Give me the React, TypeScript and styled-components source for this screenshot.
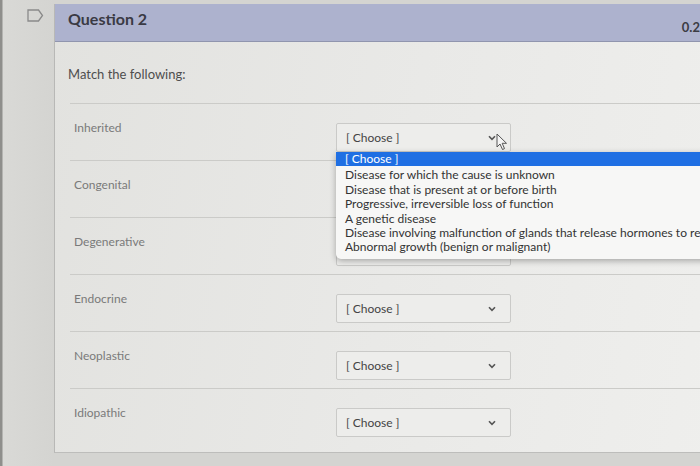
import styled, { createGlobalStyle } from 'styled-components';

const GlobalStyle = createGlobalStyle`
  html, body {
    margin: 0;
    padding: 0;
    overflow: hidden;
    background: #d6d6d3;
  }
  body {
    font-family: Lato, "Open Sans", "Liberation Sans", sans-serif;
  }
`;

const Page = styled.div`
  width: 700px;
  height: 466px;
  overflow: hidden;
  display: flex;
  padding-top: 4px;
  box-sizing: border-box;
  background: linear-gradient(90deg, #8f8f8c 0, #8f8f8c 2px, #d9d9d6 3px, #d4d4d1 54px);
`;

const Gutter = styled.div`
  width: 54px;
  flex: none;
  display: flex;
  justify-content: flex-end;
  padding: 5px 10px 0 0;
  box-sizing: border-box;
`;

const Card = styled.section`
  flex: none;
  width: 680px;
  height: 448px;
  display: flex;
  flex-direction: column;
  border-left: 1px solid #b8b8b6;
  border-bottom: 1px solid #bdbdbb;
  background: linear-gradient(100deg, #e2e2df 0%, #e9e9e7 50%, #efefed 100%);
`;

const Header = styled.header`
  height: 38px;
  flex: none;
  display: flex;
  justify-content: space-between;
  align-items: center;
  padding: 0 14px 9px 13px;
  box-sizing: border-box;
  background: #adb2ce;
  border-bottom: 1px solid #9095ae;
`;

const Title = styled.h2`
  margin: 0;
  font-size: 16px;
  font-weight: 700;
  color: #3a3a44;
`;

const Points = styled.span`
  margin-top: 18px;
  font-size: 13px;
  font-weight: 700;
  color: #3c3c44;
`;

const Body = styled.div`
  padding: 24px 0 0 13px;
`;

const Prompt = styled.p`
  margin: 0;
  font-size: 13px;
  line-height: 16px;
  color: #4e4e4e;
`;

const MatchList = styled.div`
  margin-top: 21px;
  display: flex;
  flex-direction: column;
`;

const Row = styled.div<{ $raised?: boolean }>`
  position: relative;
  height: 56px;
  display: grid;
  grid-template-columns: 266px 175px;
  align-items: start;
  border-top: 1px solid #cbcbc8;
  margin-left: 2px;
  z-index: ${(p) => (p.$raised ? 2 : 1)};
`;

const Label = styled.div`
  padding: 16px 0 0 4px;
  font-size: 12px;
  line-height: 15px;
  color: #7a7a7a;
`;

const SelectBox = styled.div`
  position: relative;
  margin-top: 19px;
  height: 29px;
  display: flex;
  align-items: center;
  justify-content: space-between;
  padding: 0 14px 0 9px;
  box-sizing: border-box;
  border: 1px solid #cacac8;
  border-radius: 2px;
  background: #ededeb;
  font-size: 12px;
  color: #444444;
`;

const Chevron = styled.svg`
  width: 8px;
  height: 6px;
`;

const Cursor = styled.svg`
  position: absolute;
  right: 2px;
  top: 9px;
  width: 12px;
  height: 18px;
`;

const Dropdown = styled.ul`
  position: absolute;
  top: 100%;
  left: -1px;
  width: 390px;
  margin: 1px 0 0;
  padding: 0 0 4px;
  list-style: none;
  background: #f7f7f6;
  border-radius: 0 0 5px 5px;
  box-shadow: 0 2px 6px rgba(0, 0, 0, 0.3);
`;

const Option = styled.li<{ $active?: boolean }>`
  padding: 0 9px;
  margin: ${(p) => (p.$active ? '0 0 2px' : '0')};
  font-size: 12px;
  line-height: 14.4px;
  white-space: nowrap;
  color: ${(p) => (p.$active ? '#ffffff' : '#333333')};
  background: ${(p) => (p.$active ? '#1f6fe3' : 'transparent')};
`;

const terms = ['Inherited', 'Congenital', 'Degenerative', 'Endocrine', 'Neoplastic', 'Idiopathic'];

const options = [
  '[ Choose ]',
  'Disease for which the cause is unknown',
  'Disease that is present at or before birth',
  'Progressive, irreversible loss of function',
  'A genetic disease',
  'Disease involving malfunction of glands that release hormones to regulate',
  'Abnormal growth (benign or malignant)',
];

const TagIcon = () => (
  <svg width="17" height="13" viewBox="0 0 17 13">
    <path d="M1 1 H11.5 L15.5 6.5 L11.5 12 H1 Z" fill="none" stroke="#8a8a8a" strokeWidth="1.3" />
  </svg>
);

const App = () => (
  <>
    <GlobalStyle />
    <Page>
      <Gutter>
        <TagIcon />
      </Gutter>
      <Card>
        <Header>
          <Title>Question 2</Title>
          <Points>0.2 pts</Points>
        </Header>
        <Body>
          <Prompt>Match the following:</Prompt>
          <MatchList>
            {terms.map((term, i) => (
              <Row key={term} $raised={i === 0}>
                <Label>{term}</Label>
                <SelectBox>
                  <span>[ Choose ]</span>
                  <Chevron viewBox="0 0 8 6">
                    <path d="M1 1.2 L4 4.4 L7 1.2" fill="none" stroke="#555" strokeWidth="1.6" />
                  </Chevron>
                  {i === 0 && (
                    <>
                      <Cursor viewBox="0 0 12 18">
                        <path
                          d="M1 1 L1 14 L4 11 L6.5 16.5 L8.5 15.6 L6.2 10.3 L10.5 10.3 Z"
                          fill="#f4f4f4"
                          stroke="#555"
                          strokeWidth="1"
                        />
                      </Cursor>
                      <Dropdown>
                        {options.map((opt, j) => (
                          <Option key={opt} $active={j === 0}>{opt}</Option>
                        ))}
                      </Dropdown>
                    </>
                  )}
                </SelectBox>
              </Row>
            ))}
          </MatchList>
        </Body>
      </Card>
    </Page>
  </>
);

export default App;
